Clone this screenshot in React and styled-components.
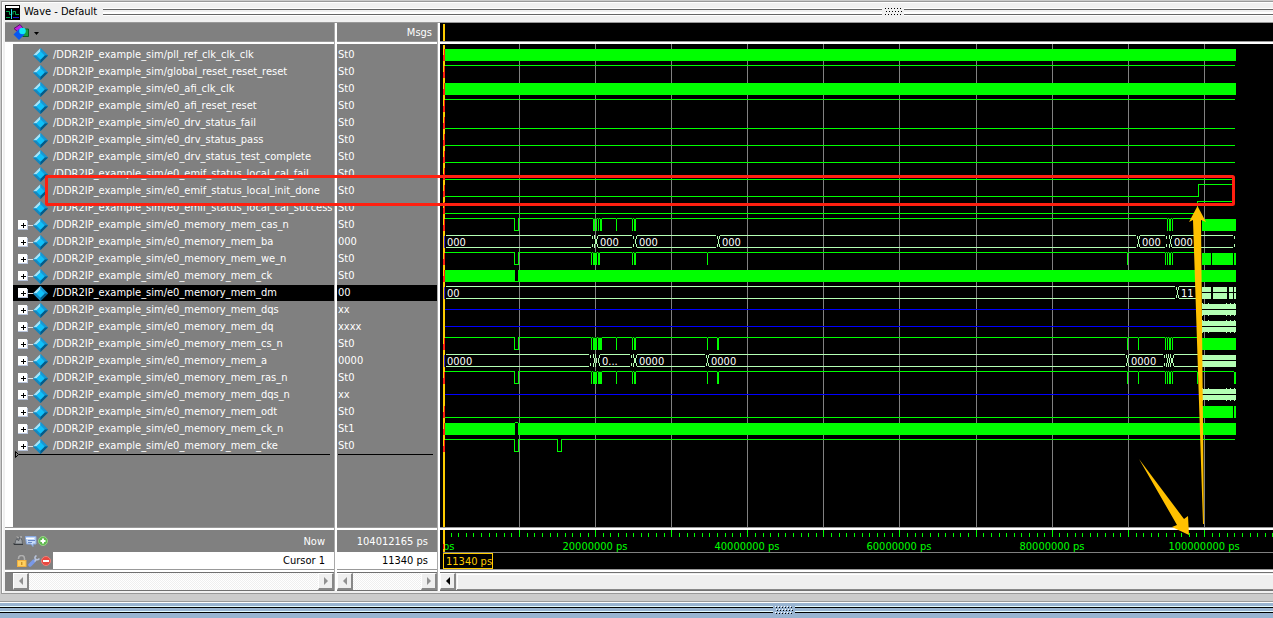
import React from "react";
import styled, { createGlobalStyle, css } from "styled-components";

const GlobalStyle = createGlobalStyle`
  * { box-sizing: border-box; }
  html, body, #root { height: 100%; }
  body {
    margin: 0;
    overflow: hidden;
    background: #cbcbcb;
    font-family: Tahoma, "DejaVu Sans Condensed", "Noto Sans", sans-serif;
    font-size: 11px;
    line-height: 16px;
    color: #fff;
  }
`;

const GREY = "#808080";
const GREEN = "#00ff00";
const MINT = "#b4ffb4";
const GOLD = "#ffcc00";
const RED = "#ff2010";

/* ---------- window frame ---------- */

const Page = styled.div`
  position: relative;
  display: flex;
  flex-direction: column;
  height: 100vh;
  min-height: 560px;
  padding: 1px 0 0 1px;
`;

const Window = styled.section`
  flex: 1;
  min-height: 0;
  display: flex;
  flex-direction: column;
  border: solid #999;
  border-width: 1px 0 1px 1px;
  padding: 0 0 2px 3px;
  background: #f0f0f0;
  box-shadow: inset 1px 1px #fff;
`;

const TitleBar = styled.header`
  display: flex;
  align-items: center;
  height: 21px;
  padding: 1px 0;
  border-bottom: 1px solid #999;
  color: #000;
`;

const Title = styled.h1`
  margin: 0 6px 0 4px;
  font-size: 11px;
  font-weight: 400;
  line-height: 18px;
  white-space: nowrap;
`;

const GripLine = styled.div`
  flex: ${(p) => p.$grow};
  height: 8px;
  border: solid #fff;
  border-width: 1px 0;
  background: linear-gradient(#666 1px, #f0f0f0 1px 3px, #fff 3px 5px, #666 5px);
`;

const Panes = styled.div`
  flex: 1;
  min-height: 0;
  display: flex;
`;

const Pane = styled.div`
  display: flex;
  flex-direction: column;
  min-width: 0;
  ${(p) =>
    p.$width
      ? css`
          flex: 0 0 ${p.$width};
          border-right: 2px solid #fff;
          box-shadow: inset -1px 0 #a8a8a8;
          padding-right: 1px;
        `
      : css`
          flex: 1;
        `}
`;

const PaneHead = styled.div`
  flex: 0 0 18px;
  display: flex;
  align-items: center;
  justify-content: ${(p) => (p.$end ? "flex-end" : "flex-start")};
  padding: ${(p) => (p.$end ? "2px" : "0")} 5px 0 8px;
  background: ${GREY};
`;

const WaveHead = styled.div`
  flex: 0 0 18px;
  padding: 1px 0 0 3px;
  background: #000;
`;

const CursorStub = styled.div`
  width: 2px;
  height: 17px;
  background: ${GOLD};
`;

const Rule = styled.div`
  flex: 0 0 3px;
  border-top: 1px solid #999;
  background: #fff;
`;

const PaneBody = styled.div`
  flex: 1;
  min-height: 0;
  overflow: hidden;
  background: ${(p) => (p.$dark ? "#000" : GREY)};
  ${(p) => p.$gutter && "border-left: 8px solid #fff;"}
`;

const PaneFoot = styled.div`
  flex: 0 0 39px;
  background: ${(p) => (p.$dark ? "#000" : GREY)};
  overflow: hidden;
`;

/* ---------- signal rows ---------- */

const List = styled.ul`
  list-style: none;
  margin: 0;
  padding: 3px 0 0;
`;

const rowBase = css`
  display: flex;
  align-items: center;
  height: 16px;
  margin-bottom: 1px;
  line-height: 14px;
  white-space: nowrap;
  background: ${(p) => (p.$selected ? "#000" : "transparent")};
`;

const SignalRow = styled.li`
  ${rowBase}
  padding-left: 5px;
`;

const ValueRow = styled.li`
  ${rowBase}
  padding-left: 1px;
`;

const ExpandSlot = styled.span`
  flex: 0 0 15px;
  display: flex;
  align-items: center;
  height: 16px;
`;

const ExpandButton = styled.button`
  display: block;
  width: 15px;
  height: 10px;
  padding: 0;
  border: 0;
  background: none;
  svg { display: block; }
`;

const SignalName = styled.span`
  margin-left: 5px;
`;

const InsertLine = styled.div`
  display: flex;
  align-items: center;
  height: 7px;
  margin: -4px 4px 0 ${(p) => (p.$marker ? "2px" : "1px")};
  &::after {
    content: "";
    flex: 1;
    height: 1px;
    background: #000;
  }
`;

/* ---------- footer ---------- */

const InfoRow = styled.div`
  display: flex;
  align-items: center;
  height: ${(p) => (p.$cursor ? "17px" : "22px")};
`;

const IconGroup = styled.div`
  flex: 0 0 ${(p) => p.$width};
  display: flex;
  align-items: center;
  padding-left: ${(p) => p.$inset};
`;

const IconButton = styled.button`
  width: 12px;
  height: 14px;
  padding: 0;
  border: 0;
  background: none;
  svg { display: block; }
`;

const InfoText = styled.div`
  flex: 1;
  align-self: stretch;
  padding: ${(p) => (p.$cursor ? "1px" : "4px")} 9px 0 0;
  text-align: right;
  ${(p) => p.$cursor && "background: #fff; color: #000;"}
`;

const CursorTag = styled.output`
  display: block;
  width: 50px;
  height: 16px;
  margin-left: 3px;
  padding-left: 2px;
  border: 1px solid ${GOLD};
  color: ${GOLD};
  line-height: 15px;
  white-space: nowrap;
`;

const RulerEdge = styled.div`
  height: 1px;
  margin-left: 3px;
  background: #808080;
`;

/* ---------- scroll bars ---------- */

const Scroll = styled.div`
  flex: 0 0 19px;
  display: flex;
  border: solid #707070;
  border-width: 1px 0;
  border-left: ${(p) => p.$inset} solid ${GREY};
`;

const Track = styled.div`
  flex: 1;
  background: repeating-conic-gradient(#fff 0 25%, #efefef 0 50%) 0 0 / 2px 2px;
`;

const Thumb = styled.div`
  flex: 1;
  margin: 1px 0 1px 1px;
  background: #efefef;
  border: solid #fff;
  border-width: 1px 0 0 1px;
  box-shadow: 0 1px #888;
`;

const ScrollButton = styled.button`
  flex: 0 0 16px;
  display: flex;
  align-items: center;
  justify-content: center;
  padding: 0;
  background: #efefef;
  border: solid;
  border-width: 1px 2px 2px 1px;
  border-color: #fff #888 #888 #fff;
  color: ${(p) => (p.$active ? "#000" : "#909090")};
`;

const Svg = styled.svg`
  display: block;
`;

const DockBar = styled.footer`
  flex: 0 0 17px;
  display: flex;
  align-items: center;
  margin: 7px 0 0 -1px;
  padding-bottom: 1px;
  border-top: 1px solid #999;
  box-shadow: inset 0 1px #fff;
  background: #99b4d1;
`;

const DockLine = styled.div`
  flex: ${(p) => p.$grow};
  height: 7px;
  background: linear-gradient(#e4fbff 1px, #000 1px 2px, #99b4d1 2px 5px, #e4fbff 5px 6px, #000 6px);
`;

const Overlay = styled.svg`
  position: absolute;
  left: 0;
  top: 0;
  width: 100%;
  height: 100%;
  pointer-events: none;
`;

/* ---------- data ---------- */

const signals = [
  ["pll_ref_clk_clk_clk", "St0"],
  ["global_reset_reset_reset", "St0"],
  ["e0_afi_clk_clk", "St0"],
  ["e0_afi_reset_reset", "St0"],
  ["e0_drv_status_fail", "St0"],
  ["e0_drv_status_pass", "St0"],
  ["e0_drv_status_test_complete", "St0"],
  ["e0_emif_status_local_cal_fail", "St0"],
  ["e0_emif_status_local_init_done", "St0"],
  ["e0_emif_status_local_cal_success", "St0"],
  ["e0_memory_mem_cas_n", "St0", true],
  ["e0_memory_mem_ba", "000", true],
  ["e0_memory_mem_we_n", "St0", true],
  ["e0_memory_mem_ck", "St0", true],
  ["e0_memory_mem_dm", "00", true],
  ["e0_memory_mem_dqs", "xx", true],
  ["e0_memory_mem_dq", "xxxx", true],
  ["e0_memory_mem_cs_n", "St0", true],
  ["e0_memory_mem_a", "0000", true],
  ["e0_memory_mem_ras_n", "St0", true],
  ["e0_memory_mem_dqs_n", "xx", true],
  ["e0_memory_mem_odt", "St0", true],
  ["e0_memory_mem_ck_n", "St1", true],
  ["e0_memory_mem_cke", "St0", true],
];
const SELECTED = 14;

/* Positions are in plot pixels, with the cursor at x = 4. Spikes are [x, width]. */
const END = 796;
const burst = [[153, 4], [158, 4]];
const tail = [[725, 1], [727, 1], [729, 2], [732, 1]];

const waves = [
  { fill: [[5, END]] },
  { high: [[5, 795]] },
  { fill: [[5, END]] },
  { high: [[5, 795]] },
  { low: [[5, 795]] },
  { low: [[5, 795]] },
  { low: [[5, 795]] },
  { low: [[5, 795]] },
  { low: [[5, 758]], high: [[758, 795]], edge: [758] },
  { low: [[5, 757]], high: [[757, 795]], edge: [757] },
  {
    high: [[5, 757]], pulse: [74],
    spikes: [[153, 2], [156, 1], [158, 1], [160, 2], [176, 1], [192, 1], [194, 2], [727, 1], [729, 1], [730, 1], [732, 1]],
    fill: [[762, END]],
  },
  { bus: [[5, 152, "000"], [157, 193, "000"], [196, 277, "000"], [279, 697, "000"], [699, 726, "000"], [731, 794, "000"]], cross: [154, 729] },
  {
    high: [[5, 757]], pulse: [74],
    spikes: [[151, 1], [153, 3], [156, 1], [158, 2], [192, 1], [194, 2], [267, 1], [687, 1], ...tail],
    fill: [[762, 771], [772, 793], [794, END]],
  },
  { fill: [[5, 75], [78, END]], gap: "low" },
  { bus: [[5, 736, "00"], [738, 762, "11"]], data: [[762, 771], [773, 787], [789, 793], [794, 796]] },
  { mid: [[5, 760]], data: [[762, END]], nubs: true },
  { mid: [[5, 760]], data: [[762, END]], nubs: true },
  {
    high: [[5, 757]], pulse: [74],
    spikes: [[151, 1], ...burst, [176, 1], [192, 1], [194, 2], [267, 1], [277, 2], [687, 1], [698, 1], ...tail],
    fill: [[762, END]],
  },
  { bus: [[5, 150, "0000"], [159, 191, "0..."], [196, 266, "0000"], [268, 686, "0000"], [688, 724, "0000"], [733, 762, ""]], cross: [153, 155, 193, 726, 728, 730], data: [[762, END]] },
  {
    high: [[5, 794]], pulse: [74],
    spikes: [[151, 1], ...burst, [176, 1], [192, 1], [194, 2], [267, 1], [277, 2], [687, 1], [698, 1], ...tail, [757, 1]],
    fill: [[794, END]],
  },
  { mid: [[5, 760]], data: [[762, END]], nubs: true },
  { low: [[5, 762]], fill: [[762, 793], [794, END]] },
  { fill: [[5, 75], [78, END]], gap: "high" },
  { high: [[5, 795]], pulse: [74, 117] },
];

const majors = Array.from({ length: 30 }, (_, i) => Math.floor(3.4 + 76.1 * (i + 1)));
const minors = Array.from({ length: 300 }, (_, i) => i + 1)
  .filter((i) => i % 10)
  .map((i) => Math.round(3 + 7.61 * i));
const timeLabels = [1, 2, 3, 4, 5].map((n) => [majors[2 * n - 1], `${n * 20000000} ps`]);

/* ---------- drawings ---------- */

const Bar = ({ x, y, w, h, c }) => <rect x={x} y={y} width={w} height={h} fill={c} />;

function Trace({ wave, y }) {
  const { fill = [], high = [], low = [], mid = [], edge = [], pulse = [], spikes = [], bus = [], cross = [], data = [], gap, nubs } = wave;
  return (
    <g>
      {mid.map(([a, b]) => <Bar key={a} x={a} y={y + 5} w={b - a} h={1} c="#0000ff" />)}
      {high.map(([a, b]) => <Bar key={a} x={a} y={y - 1} w={b - a} h={1} c={GREEN} />)}
      {low.map(([a, b]) => <Bar key={a} x={a} y={y + 11} w={b - a} h={1} c={GREEN} />)}
      {edge.map((x) => <Bar key={x} x={x} y={y - 1} w={1} h={13} c={GREEN} />)}
      {fill.map(([a, b]) => <Bar key={a} x={a} y={y} w={b - a} h={12} c={GREEN} />)}
      {gap && <Bar x={75} y={gap === "low" ? y + 11 : y - 1} w={3} h={1} c={GREEN} />}
      {pulse.map((x) => (
        <g key={x}>
          <Bar x={x + 1} y={y - 1} w={3} h={12} c="#000" />
          <path d={`M${x}.5 ${y - 1}V${y + 11}.5H${x + 4}.5V${y - 1}`} fill="none" stroke={GREEN} />
        </g>
      ))}
      {spikes.map(([x, w]) => (
        <g key={x}>
          <Bar x={x} y={y - 1} w={w} h={1} c="#005000" />
          <Bar x={x} y={y} w={w} h={12} c={GREEN} />
        </g>
      ))}
      {bus.map(([a, b, label]) => (
        <g key={a}>
          <path
            d={`M${a + 1} ${y - 1}.5H${b - 1}M${a + 1} ${y + 11}.5H${b - 1}M${b}.5 ${y}v3M${b}.5 ${y + 8}v3${a > 5 ? `M${a}.5 ${y}v3M${a}.5 ${y + 8}v3` : ""}`}
            fill="none"
            stroke={MINT}
          />
          {a > 5 && <Bar x={a - 1} y={y + 3} w={1} h={5} c={MINT} />}
          <text x={a === 5 ? a + 2 : a + 3} y={y + 10} fill="#fff">{label}</text>
        </g>
      ))}
      {cross.map((x) => <path key={x} d={`M${x}.5 ${y - 1}v4m1 0v5m-1 0v4`} stroke={MINT} fill="none" />)}
      {data.map(([a, b]) => <Bar key={a} x={a} y={y} w={b - a} h={bus.length ? 12 : 11} c={MINT} />)}
      {data.length > 0 && <Bar x={762} y={y + 5} w={34} h={1} c="#000" />}
      {nubs && [762, 768, 786, 790, 794].map((x) => (
        <g key={x}>
          <Bar x={x} y={y - 1} w={1} h={1} c={MINT} />
          <Bar x={x} y={y + 11} w={1} h={1} c={MINT} />
        </g>
      ))}
      {!mid.length && <Bar x={4} y={y} w={1} h={6} c={bus.length ? "#5030d0" : RED} />}
      {!mid.length && <Bar x={bus.length ? 4 : 3} y={y + 6} w={bus.length ? 1 : 2} h={6} c={bus.length ? "#5030d0" : RED} />}
    </g>
  );
}

const WavePlot = () => (
  <Svg width="100%" height="100%" shapeRendering="crispEdges" fontSize="11" role="img" aria-label="Signal waveforms">
    {majors.map((x) => <Bar key={x} x={x} y={0} w={1} h="100%" c="#808080" />)}
    <Bar x={3} y={1} w={2} h="100%" c={GOLD} />
    {waves.map((wave, i) => <Trace key={i} wave={wave} y={5 + 17 * i} />)}
  </Svg>
);

const Ruler = () => (
  <Svg width="100%" height="22" shapeRendering="crispEdges" fontSize="11" fill={GREEN}>
    {minors.map((x) => <Bar key={x} x={x} y={3} w={1} h={4} c={GREEN} />)}
    {majors.map((x) => <Bar key={x} x={x} y={0} w={1} h={7} c={GREEN} />)}
    <text x="3" y="20">ps</text>
    {timeLabels.map(([x, label]) => (
      <text key={x} x={x} y="20" textAnchor="middle">{label}</text>
    ))}
    <Bar x={3} y={0} w={2} h={22} c={GOLD} />
    <Bar x={3} y={14} w={1} h={5} c={RED} />
  </Svg>
);

const Diamond = () => (
  <svg width="15" height="15" viewBox="0 0 14 14" aria-hidden="true">
    <path d="M7 0L14 7L7 14L0 7Z" fill="#0878b4" />
    <path d="M7 0L0 7H3.500L7 3.500Z" fill="#a8e4f8" />
    <path d="M7 0L14 7H10.500L7 3.500Z" fill="#1898d4" />
    <path d="M0 7L7 14V10.500L3.500 7Z" fill="#1488c0" />
    <path d="M14 7L7 14V10.500L10.500 7Z" fill="#045a88" />
    <path d="M7 3L11 7L7 11L3 7Z" fill="#10c0f8" />
  </svg>
);

const Plus = () => (
  <svg width="15" height="10" viewBox="0 0 15 10" shapeRendering="crispEdges" aria-hidden="true">
    <rect width="9" height="10" fill="#fff" />
    <path d="M0 9.500H9.500V1" fill="none" stroke="#b8c4dc" />
    <path d="M3 5.500H8M5.500 3V8" stroke="#000" />
    <path d="M10 5.500H15" stroke="#e0e0e0" />
  </svg>
);

const WaveIcon = () => (
  <svg width="15" height="15" viewBox="0 0 15 15" aria-hidden="true">
    <rect width="15" height="15" fill="#000" />
    <rect x="1" y="1" width="13" height="2" fill="#fff" />
    <path d="M1 6.500H4.500V9.500H6M8 9.500V6.500H10.500V9.500H14" fill="none" stroke="#00a850" />
    <path d="M1 12.500H5" stroke="#00a850" />
    <path d="M6.500 4V14" stroke="#30e0f0" />
    <path d="M8 12.500H14" stroke="#2020d0" />
  </svg>
);

const ShapesIcon = () => (
  <svg width="26" height="16" viewBox="0 0 26 16" aria-hidden="true">
    <path d="M1 4.500L7 0.500L10 4L5 8Z" fill="#c020e0" stroke="#58106c" />
    <path d="M12 5H15.500V12.500H9.500" fill="#18a040" stroke="#0c5c24" />
    <path d="M6 5L11.500 10.500L6 16L0.500 10.500Z" fill="#0858f0" />
    <circle cx="9.500" cy="7" r="3.300" fill="#10e8f8" />
    <path d="M21 8H26L23.500 11Z" fill="#000" />
  </svg>
);

const FindIcon = () => (
  <svg width="12" height="12" viewBox="0 0 12 12">
    <path d="M2.500 6L4 3.500L5.500 6L7 2L9 5L9.500 9H2Z" fill="#a0a4a8" stroke="#60646a" />
    <path d="M1 9.500H10M1 9.500V8" stroke="#34383c" />
    <path d="M4 1.500L5.500 3M8 1V3" stroke="#c8c8c8" />
  </svg>
);
const NoteIcon = () => (
  <svg width="12" height="12" viewBox="0 0 12 12">
    <path d="M0.500 1.500H11V9H8V11.500L6 9H1.500Z" fill="#c8dcf8" stroke="#88a8e0" />
    <path d="M1 3.500H9" stroke="#fff" />
    <path d="M3 5.500H10M3 7.500H7" stroke="#6888c8" />
  </svg>
);
const RoundIcon = ({ color, edge, add }) => (
  <svg width="12" height="12" viewBox="0 0 12 12">
    <circle cx="6" cy="6" r="4.500" fill={color} stroke={edge} />
    <path d={add ? "M3.500 6H8.500M6 3.500V8.500" : "M3 6H9"} stroke="#fff" strokeWidth="2" />
  </svg>
);
const LockIcon = () => (
  <svg width="12" height="12" viewBox="0 0 12 12">
    <path d="M2.500 4V3.500A3 3 0 0 1 8.500 3.500V5.500" fill="none" stroke="#b0b0b0" strokeWidth="1.500" />
    <rect x="1.500" y="5.500" width="8.500" height="6" fill="#ffd060" stroke="#f0b040" />
    <path d="M5.800 7V10" stroke="#b87810" />
  </svg>
);
const WrenchIcon = () => (
  <svg width="12" height="12" viewBox="0 0 12 12">
    <path d="M2 10L6 6" stroke="#7898e8" strokeWidth="3.500" strokeLinecap="round" />
    <path d="M6.500 6.500L9 4M8.500 0.500Q6 2 7.500 4.500Q10 5.500 11.500 3.500" fill="none" stroke="#b8c4dc" strokeWidth="1.500" />
  </svg>
);

const Arrow = ({ right }) => (
  <svg width="6" height="8" viewBox="0 0 6 8" aria-hidden="true">
    <path d={right ? "M1 0L5 4L1 8Z" : "M5 0L1 4L5 8Z"} fill="currentColor" />
  </svg>
);

const Grip = ({ shadow }) => (
  <svg width="22" height="8" viewBox="0 0 22 8" shapeRendering="crispEdges" aria-hidden="true">
    {[0, 3, 6].map((y, r) =>
      [0, 1, 2, 3, 4, 5].map((i) => (
        <g key={`${y}-${i}`}>
          {shadow && <Bar x={2 + i * 3 + (r % 2)} y={y} w={1} h={1} c="#fff" />}
          <Bar x={3 + i * 3 + (r % 2)} y={shadow ? y + 1 : y} w={1} h={1} c="#000" />
        </g>
      ))
    )}
  </svg>
);

function ScrollBar({ inset = "0px" }) {
  return (
    <Scroll $inset={inset}>
      <ScrollButton type="button" aria-label="Scroll left"><Arrow /></ScrollButton>
      <Track />
      <ScrollButton type="button" aria-label="Scroll right"><Arrow right /></ScrollButton>
    </Scroll>
  );
}

export default function App() {
  return (
    <Page>
      <GlobalStyle />
      <Window>
        <TitleBar>
          <WaveIcon />
          <Title>Wave - Default</Title>
          <GripLine $grow={780} />
          <Grip />
          <GripLine $grow={370} />
        </TitleBar>
        <Panes>
          <Pane $width="332px">
            <PaneHead><ShapesIcon /></PaneHead>
            <Rule />
            <PaneBody $gutter>
              <List>
                {signals.map(([name, , group], i) => (
                  <SignalRow key={name} $selected={i === SELECTED}>
                    <ExpandSlot>
                      {group && <ExpandButton type="button" aria-label={`Expand ${name}`}><Plus /></ExpandButton>}
                    </ExpandSlot>
                    <Diamond />
                    <SignalName>/DDR2IP_example_sim/{name}</SignalName>
                  </SignalRow>
                ))}
              </List>
              <InsertLine $marker>
                <svg width="4" height="7" viewBox="0 0 4 7"><path d="M0.500 0.500V6.500L3.500 3.500Z" fill="none" stroke="#000" /></svg>
              </InsertLine>
            </PaneBody>
            <Rule />
            <PaneFoot>
              <InfoRow>
                <IconGroup $width="48px" $inset="8px">
                  <IconButton type="button" aria-label="Find"><FindIcon /></IconButton>
                  <IconButton type="button" aria-label="Note"><NoteIcon /></IconButton>
                  <IconButton type="button" aria-label="Add cursor"><RoundIcon add color="#60b850" edge="#98d088" /></IconButton>
                </IconGroup>
                <InfoText>Now</InfoText>
              </InfoRow>
              <InfoRow $cursor>
                <IconGroup $width="48px" $inset="11px">
                  <IconButton type="button" aria-label="Lock cursor"><LockIcon /></IconButton>
                  <IconButton type="button" aria-label="Edit cursor"><WrenchIcon /></IconButton>
                  <IconButton type="button" aria-label="Delete cursor"><RoundIcon color="#e84840" edge="#f08078" /></IconButton>
                </IconGroup>
                <InfoText $cursor>Cursor 1</InfoText>
              </InfoRow>
            </PaneFoot>
            <Rule />
            <ScrollBar inset="8px" />
          </Pane>
          <Pane $width="103px">
            <PaneHead $end>Msgs</PaneHead>
            <Rule />
            <PaneBody>
              <List>
                {signals.map(([name, value], i) => (
                  <ValueRow key={name} $selected={i === SELECTED}>{value}</ValueRow>
                ))}
              </List>
              <InsertLine />
            </PaneBody>
            <Rule />
            <PaneFoot>
              <InfoRow><InfoText>104012165 ps</InfoText></InfoRow>
              <InfoRow $cursor><InfoText $cursor>11340 ps</InfoText></InfoRow>
            </PaneFoot>
            <Rule />
            <ScrollBar />
          </Pane>
          <Pane>
            <WaveHead><CursorStub /></WaveHead>
            <Rule />
            <PaneBody $dark><WavePlot /></PaneBody>
            <Rule />
            <PaneFoot $dark>
              <Ruler />
              <RulerEdge />
              <CursorTag>11340 ps</CursorTag>
            </PaneFoot>
            <Rule />
            <Scroll $inset="0px">
              <ScrollButton type="button" $active aria-label="Scroll left"><Arrow /></ScrollButton>
              <Thumb />
            </Scroll>
          </Pane>
        </Panes>
      </Window>
      <DockBar>
        <DockLine $grow={773} />
        <Grip shadow />
        <DockLine $grow={478} />
      </DockBar>
      <Overlay aria-hidden="true">
        <rect x="46.500" y="176.500" width="1187" height="28" rx="1" fill="none" stroke={RED} strokeWidth="3" />
        <path d="M1197.500 206L1206 222L1201 220L1204 524H1203L1193 220L1189 222Z" fill="#ffc000" />
        <path d="M1139 459L1184 519L1188 516L1189 535L1172 527L1177 525Z" fill="#ffc000" />
      </Overlay>
    </Page>
  );
}
